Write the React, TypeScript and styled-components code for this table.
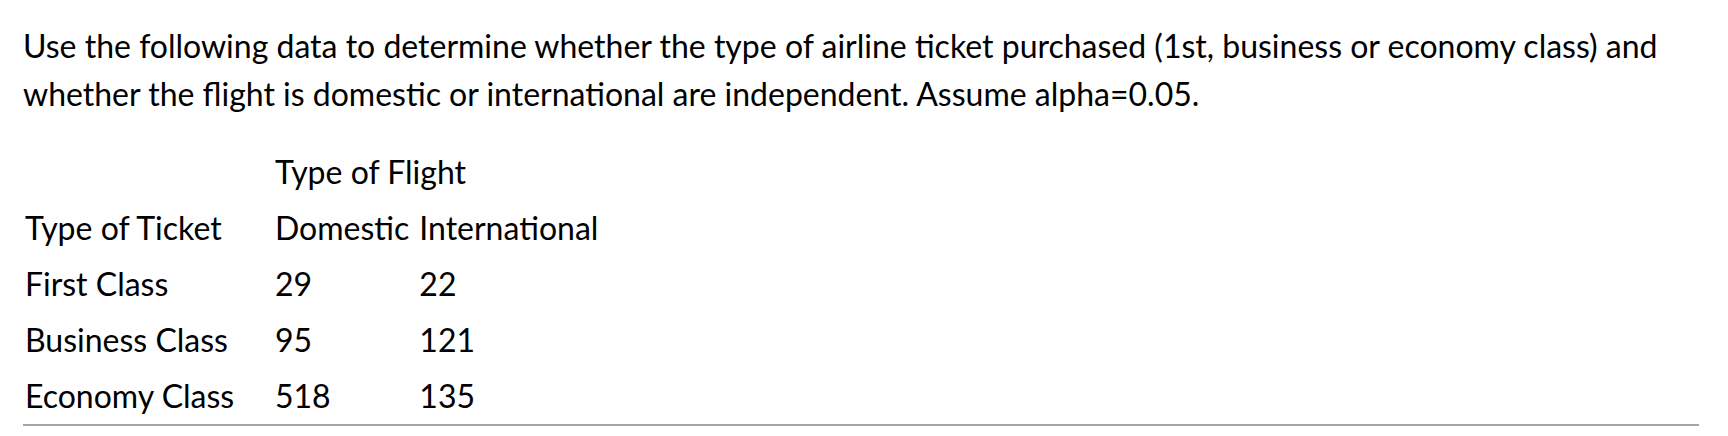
import React from "react";
import styled, { createGlobalStyle } from "styled-components";

const GlobalStyle = createGlobalStyle`
  html, body {
    margin: 0;
    padding: 0;
    background: #ffffff;
  }
  body {
    font-family: Lato, "Open Sans", "Liberation Sans", sans-serif;
    color: #000000;
  }
`;

const Page = styled.div`
  padding: 22px 29px 0 23px;
`;

const Question = styled.div`
  border-bottom: 2px solid #a5a5a5;
  font-size: 32px;
  line-height: 1.5;
`;

const Paragraph = styled.p`
  margin: 0 0 26px 0;
`;

const Table = styled.table`
  border-collapse: collapse;
  font-size: 32px;
  line-height: 1.5;
`;

const Cell = styled.td<{ $width?: number }>`
  padding: 4px 8px 4px 2px;
  vertical-align: top;
  white-space: nowrap;
  ${(p) => (p.$width ? `width: ${p.$width}px;` : "")}
`;

const rows: [string, string, string][] = [
  ["Type of Ticket", "Domestic", "International"],
  ["First Class", "29", "22"],
  ["Business Class", "95", "121"],
  ["Economy Class", "518", "135"],
];

export default function App() {
  return (
    <>
      <GlobalStyle />
      <Page>
        <Question>
          <Paragraph>
            Use the following data to determine whether the type of airline ticket purchased (1st, business or economy
            class) and whether the flight is domestic or international are independent. Assume alpha=0.05.
          </Paragraph>
          <Table>
            <tbody>
              <tr>
                <Cell $width={240}></Cell>
                <Cell colSpan={2}>Type of Flight</Cell>
              </tr>
              {rows.map((r, i) => (
                <tr key={i}>
                  <Cell>{r[0]}</Cell>
                  <Cell>{r[1]}</Cell>
                  <Cell>{r[2]}</Cell>
                </tr>
              ))}
            </tbody>
          </Table>
        </Question>
      </Page>
    </>
  );
}
